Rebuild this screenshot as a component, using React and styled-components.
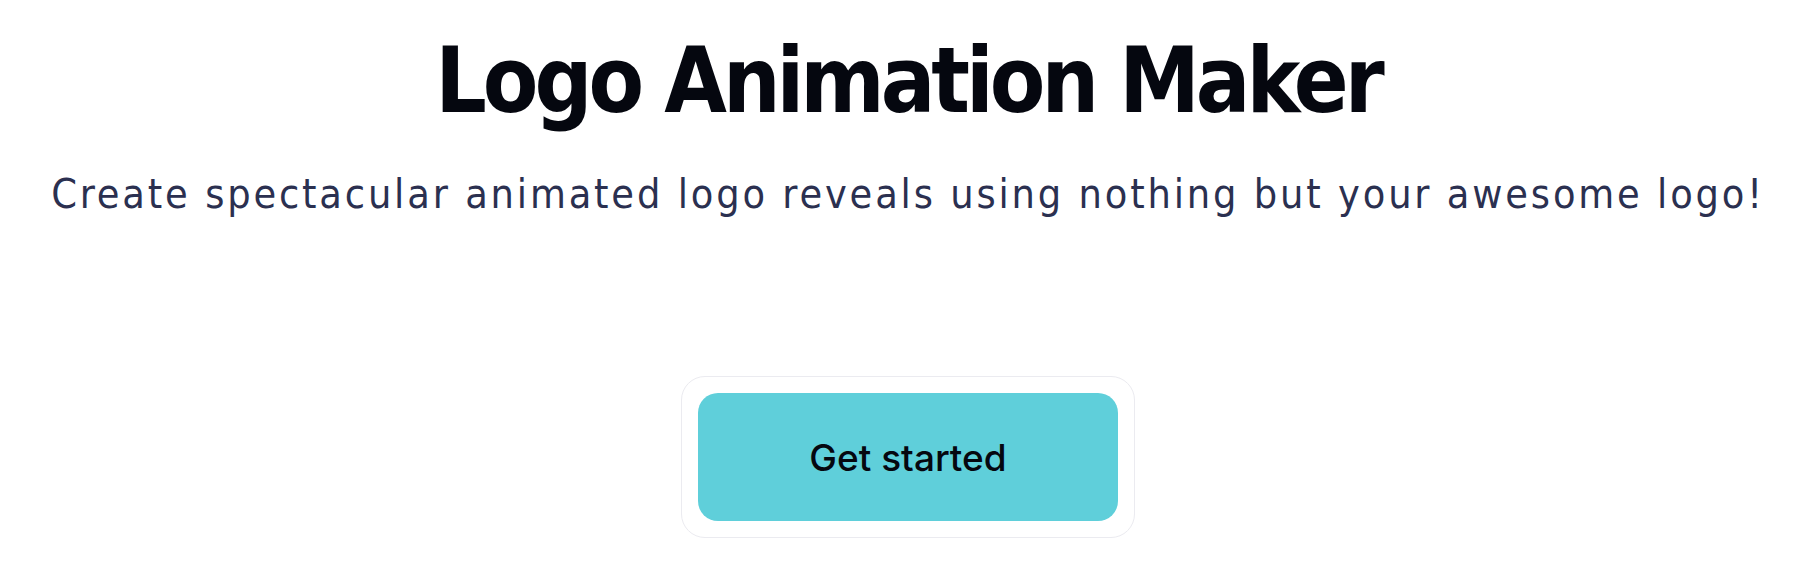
import React from 'react'
import styled, {createGlobalStyle} from 'styled-components'

const GlobalStyle = createGlobalStyle`
  html, body {
    margin: 0;
    padding: 0;
    background: #ffffff;
  }
`

const Page = styled.main`
  display: flex;
  flex-direction: column;
  align-items: center;
  padding: 36px 0 0 6px;
  min-height: 566px;
  box-sizing: border-box;
`

const Title = styled.h1`
  margin: 0;
  font-family: "DejaVu Sans Condensed", "DejaVu Sans", sans-serif;
  font-weight: 700;
  font-size: 90px;
  line-height: 1;
  letter-spacing: -4px;
  color: #05070f;
`

const Subtitle = styled.p`
  margin: 48px 0 0;
  font-family: "DejaVu Sans Condensed", "DejaVu Sans", sans-serif;
  font-weight: 400;
  font-size: 41px;
  line-height: 1;
  letter-spacing: 2.83px;
  color: #2b3050;
`

const ButtonFrame = styled.div`
  margin-top: 161px;
  padding: 16px;
  border: 1.5px solid #ebebf0;
  border-radius: 24px;
  display: flex;
`

const StartButton = styled.button`
  width: 420px;
  height: 128px;
  border: none;
  border-radius: 20px;
  background: #5fcfda;
  color: #05070f;
  font-family: Inter, "Liberation Sans", sans-serif;
  font-size: 37px;
  font-weight: 500;
  cursor: pointer;
`

export default function App() {
  return (
    <>
      <GlobalStyle />
      <Page>
        <Title>Logo Animation Maker</Title>
        <Subtitle>Create spectacular animated logo reveals using nothing but your awesome logo!</Subtitle>
        <ButtonFrame>
          <StartButton>Get started</StartButton>
        </ButtonFrame>
      </Page>
    </>
  )
}
